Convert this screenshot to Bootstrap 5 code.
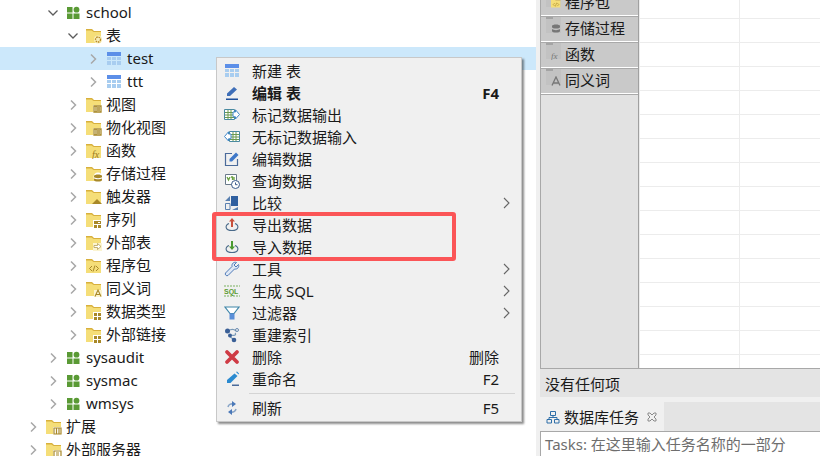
<!DOCTYPE html>
<html lang="zh-CN">
<head>
  <meta charset="UTF-8">
  <meta name="viewport" content="width=device-width, initial-scale=1.0">
  <link rel="stylesheet" href="https://cdn.jsdelivr.net/npm/bootstrap@5.3.6/dist/css/bootstrap.min.css">
  <script src="https://cdn.jsdelivr.net/npm/bootstrap@5.3.6/dist/js/bootstrap.bundle.min.js"></script>
  <style>
    html, body { height: 456px; overflow: hidden; }
    body { font: 15px/1.2 "Noto Sans", "Noto Sans CJK SC", sans-serif; color: #1a1a1a; background: #fff; }
    .app-wrap { width: 820px; height: 456px; }

    /* tree on the left */
    .tree-pane { width: 536px; padding-top: 1px; flex: none; }
    .tree-row { height: 23px; white-space: nowrap; }
    .tree-row.lv0 { padding-left: 27px; }
    .tree-row.lv1 { padding-left: 47px; }
    .tree-row.lv2 { padding-left: 67px; }
    .tree-row.lv3 { padding-left: 87px; }
    .tree-row.picked { background: #cce8fb; }
    .tw { width: 12px; height: 12px; margin-right: 7px; flex: none; }
    .ti { width: 16px; height: 16px; margin-right: 4px; flex: none; }
    .tl { font-size: 15px; margin-top: -2px; }
    .lv1 > .ti { margin-left: 1px; margin-right: 3px; }
    .lv3 > .tl { margin-left: 1px; }

    /* context menu */
    .ctx-menu.dropdown-menu { position: absolute; display: block; left: 216px; top: 57px; width: 306px; height: 365px; min-width: 0;
      padding: 2px 0 0; margin: 0; font-size: 15px; background: #f0f0f0; border: 1px solid #c8c8c8; border-radius: 0;
      box-shadow: 2px 2px 2px rgba(0,0,0,.45); }
    .ctx-menu .dropdown-item { height: 22px; padding: 0; color: #1a1a1a; }
    .mi { width: 16px; height: 16px; margin: 0 12px 0 7px; flex: none; }
    .ms { width: 60px; text-align: right; flex: none; }
    .ma { width: 22px; flex: none; padding-left: 3px; }
    .ma svg { width: 10px; height: 12px; display: block; }
    .ctx-menu .dropdown-divider { margin: 3px 6px 3px 32px; border-color: #d4d4d4; opacity: 1; }
    .red-mark { position: absolute; z-index: 1001; left: 212px; top: 212px; width: 244px; height: 49px; border: 4px solid #fb5557; border-radius: 3px; pointer-events: none; }

    /* right side */
    .side-pane { background: #f0f0f0; padding-left: 4px; }
    .design-area { border-left: 1px solid #a8a8a8; min-height: 0; }
    .palette { width: 98px; flex: none; background: #e2e2e2; border-right: 1px solid #a0a0a0; }
    .pal-item { height: 24px; background: #c9c9c9; margin-bottom: 2px; position: relative; box-shadow: 0 1px 0 #fff, 0 2px 0 #a9a9a9; }
    .pal-item:first-child { margin-top: -9px; }
    .pal-item::before { content: ""; position: absolute; left: 5px; top: 0; width: 15px; height: 16px; background: linear-gradient(#a4a4a4, #a4a4a4) no-repeat 0 0 / 7px 2px, #c2c2c2; }
    .pi { width: 10px; height: 10px; margin: 0 4px 0 10px; position: relative; flex: none; }
    .pal-item span { position: relative; margin-top: -2px; }
    .grid-area { background-color: #fff;
      background-image: linear-gradient(#ececec 1px, transparent 1px), linear-gradient(90deg, #ececec 1px, transparent 1px);
      background-size: 100% 24px, 100px 100%; background-position: 0 18px, 100px 0; }
    .note-bar { height: 29px; background: #e4e4e4; border-top: 1px solid #a8a8a8; padding: 2px 0 0 5px; flex: none; }
    .tab-strip { height: 34px; background: #e4e4e4; border-top: 5px solid #f0f0f0; flex: none; }
    .tab-on { width: 124px; background: #f0f0f0; padding-left: 6px; }
    .tab-on svg.db { width: 14px; height: 14px; margin-right: 4px; }
    .tab-on svg.cl { width: 10px; height: 10px; margin-left: 8px; }
    .task-box { height: 25px; background: #fff; border: 1px solid #a8a8a8; border-width: 1px 0 0 1px; color: #6e6e6e; padding-left: 4px; flex: none; white-space: nowrap; }
  </style>
</head>
<body>
  <svg width="0" height="0" class="position-absolute">
    <defs>
      <symbol id="c-r" viewBox="0 0 12 12"><path d="M4 1.500 8.500 6 4 10.500" fill="none" stroke="#a8a8a8" stroke-width="1.500"/></symbol>
      <symbol id="c-d" viewBox="0 0 12 12"><path d="M1.500 3.500 6 8 10.500 3.500" fill="none" stroke="#5c5c5c" stroke-width="1.300"/></symbol>
      <symbol id="m-r" viewBox="0 0 10 12"><path d="M2 1 7 6 2 11" fill="none" stroke="#666" stroke-width="1.100"/></symbol>
      <symbol id="schema" viewBox="0 0 16 16">
        <path fill="#5a9a35" d="M0 2h5.500v5.500H0zM0 8.500h5.500V14H0zM6.500 8.500h6V14h-6z"/><circle cx="9.500" cy="4.700" r="2.900" fill="#5a9a35"/>
      </symbol>
      <symbol id="table" viewBox="0 0 16 16">
        <path fill="#5c8fe8" d="M1 1h14v4H1z"/>
        <path fill="#a8cdf0" d="M1 6h4v3H1zM6 6h4v3H6zM11 6h4v3h-4zM1 10h4v4H1zM6 10h4v4H6zM11 10h4v4h-4z"/>
      </symbol>
      <symbol id="folder" viewBox="0 0 16 16">
        <path fill="#f5de78" d="M0 2h6l2 2h7v11H0z"/><path fill="#d8b03c" d="M0 1h6l2 2h7v1H7.500L5.500 2.500H0z"/>
      </symbol>
      <symbol id="f-tbl" viewBox="0 0 16 16">
        <use href="#folder"/><circle cx="12" cy="11.500" r="4" fill="#f8eeb8"/><circle cx="12" cy="11.500" r="2.500" fill="none" stroke="#b98a24" stroke-width="1.300" stroke-dasharray="1.600 .8"/>
      </symbol>
      <symbol id="f-view" viewBox="0 0 16 16">
        <use href="#folder"/><path fill="#fff" d="M7 8h9v8H7z"/><path fill="none" stroke="#a88828" stroke-width="1.300" d="M8 9h7v6H8zM10 9v6M11 11h3M11 13h3"/>
      </symbol>
      <symbol id="f-fx" viewBox="0 0 16 16">
        <use href="#folder"/><text x="6" y="15" font-family="Liberation Serif" font-style="italic" font-size="10" fill="#9a7a20">fx</text>
      </symbol>
      <symbol id="f-db" viewBox="0 0 16 16">
        <use href="#folder"/><ellipse cx="12" cy="11" rx="4.500" ry="4.500" fill="#fff"/><path fill="#a88828" d="M8 10c0-2 8-2 8 0v1c0 1.500-8 1.500-8 0zM8 12.500c2 1 6 1 8 0V14c0 2-8 2-8 0z"/>
      </symbol>
      <symbol id="f-trg" viewBox="0 0 16 16">
        <use href="#folder"/><path fill="#a88828" d="M6 15l5-5 5 5z"/>
      </symbol>
      <symbol id="f-seq" viewBox="0 0 16 16">
        <use href="#folder"/><path fill="#fff" d="M7 8h9v8H7z"/><path fill="#a88828" d="M8 9h7v3H8zM8 13h3v3H8zM12 13h3v3h-3z"/><path fill="#fff" d="M12 10h2v1h-2z"/>
      </symbol>
      <symbol id="f-ext" viewBox="0 0 16 16">
        <use href="#folder"/><path fill="#fbf4d0" d="M7 8h9v8H7z"/><path fill="#fff" stroke="#b8a050" stroke-width=".800" d="M8 10.500h3.500V8.500l3.500 3-3.500 3v-2H8z"/>
      </symbol>
      <symbol id="f-pkg" viewBox="0 0 16 16">
        <use href="#folder"/><path fill="none" stroke="#a88828" stroke-width="1" d="M6 8 3.500 10.500 6 13M10 8l2.500 2.500L10 13M9 7.500 7 13.500"/>
      </symbol>
      <symbol id="f-syn" viewBox="0 0 16 16">
        <use href="#folder"/><path fill="#fbf4d0" d="M8 9h8v7H8z"/><path fill="none" stroke="#a88828" stroke-width="1.100" d="M9 15.500 12 9l3 6.500M10 13.500h4"/>
      </symbol>
      <symbol id="f-type" viewBox="0 0 16 16">
        <use href="#folder"/><path fill="#fff" d="M7 8h9v8H7z"/><path fill="#a88828" d="M8 9h3v3H8zM12 9h3v3h-3zM8 13h3v3H8zM12 13h3v3h-3z"/>
      </symbol>
      <symbol id="f-ext2" viewBox="0 0 16 16">
        <use href="#folder"/><path fill="#fff" d="M7 8h9v8H7z"/><path fill="none" stroke="#a88828" stroke-width="1.200" d="M8 9h7v6H8zM10.500 9v6M13 9v6"/>
      </symbol>
      <symbol id="f-srv" viewBox="0 0 16 16">
        <use href="#folder"/><path fill="#fff" d="M7 8h9v8H7z"/><path fill="none" stroke="#a88828" stroke-width="1.200" d="M8 9h7v6H8zM10 11h3M10 13h3"/>
      </symbol>
      <symbol id="i-pen" viewBox="0 0 16 16">
        <path fill="#3f6fb8" d="M10 2l3 2.500L6 11H3v-2.500z"/><path fill="#1f4f9a" d="M2 13.500h12V15H2z"/>
      </symbol>
      <symbol id="i-out" viewBox="0 0 16 16">
        <path fill="#fff" stroke="#4a8aa0" d="M.5 2.500h10v10H.5z"/><path stroke="#6a9a50" d="M1 5.500h9M1 8h9M1 10.500h9M4 3v9M7 3v9" fill="none"/><path fill="#fff" stroke="#3f86c8" d="M9 5h2.500V2.800L15.500 7.500 11.500 12V9.800H9z"/>
      </symbol>
      <symbol id="i-in" viewBox="0 0 16 16">
        <path fill="#fff" stroke="#4a8aa0" d="M5.500 2.500h10v10h-10z"/><path stroke="#6a9a50" d="M6 5.500h9M6 8h9M6 10.500h9M9 3v9M12 3v9" fill="none"/><path fill="#fff" stroke="#3f86c8" d="M7 5H4.500V2.800L.5 7.500 4.500 12V9.800H7z"/>
      </symbol>
      <symbol id="i-edit" viewBox="0 0 16 16">
        <path fill="none" stroke="#4a6a9a" stroke-width="1.200" d="M8 2.500H1.500v12h12V8"/><path fill="#3f78c8" d="M12 1.500l2.500 2.500L8 10.500H5.500V8z"/>
      </symbol>
      <symbol id="i-query" viewBox="0 0 16 16">
        <path fill="#fff" stroke="#6a7a8a" d="M1.500 1.500h11v10h-11z"/><path fill="none" stroke="#6aa040" stroke-width="1.300" d="M3 4l1.500 3L6 4M7 4h1.500v3M10 4v3"/><circle cx="11.500" cy="11.500" r="4" fill="#fff" stroke="#3a5a8a"/><path fill="none" stroke="#3a5a8a" d="M11.500 9.500v2.200h2"/>
      </symbol>
      <symbol id="i-cmp" viewBox="0 0 16 16">
        <path fill="#2f5f9f" d="M7 1h7v10H7z"/><path fill="none" stroke="#5a80b0" d="M1.500 8.500H6v6H1.500z"/><path fill="#5a80b0" d="M1 6l5-5v5zM8 15l6-3v3z"/>
      </symbol>
      <symbol id="i-pow" viewBox="0 0 16 16">
        <path fill="none" stroke="#4a6a8a" stroke-width="1.100" d="M5 6.500C1 8 .5 13.500 8 13.500S15 8 11 6.500"/>
      </symbol>
      <symbol id="i-wrench" viewBox="0 0 16 16">
        <path fill="#dfe8f5" stroke="#4f7ab8" d="M14.500 3.500 12 6 10 4l2.500-2.500C10 .5 7.500 2.500 8 5.500L1.500 12c-1 1.500 1 3.500 2.500 2.500L10.500 8c3 .5 5-2 4-4.500z"/>
      </symbol>
      <symbol id="i-funnel" viewBox="0 0 16 16">
        <path fill="#fff" stroke="#3f86a8" stroke-width="1.200" d="M1 2h14l-5 6.500H6z"/><path fill="#5a8fd8" d="M5.500 8.500h5v6h-5z"/>
      </symbol>
      <symbol id="i-index" viewBox="0 0 16 16">
        <path fill="none" stroke="#7a9ab8" stroke-width="1.100" d="M4 4c3-2 6-2 8 0M11 6c2 2-1 3-5 2M5 9l4 3"/><circle cx="3.500" cy="4" r="2.500" fill="#3a5f96"/><circle cx="6" cy="8.500" r="2" fill="#3a5f96"/><circle cx="10" cy="13" r="2.300" fill="#3a5f96"/><circle cx="13" cy="3" r="1.500" fill="none" stroke="#6a8ab0"/>
      </symbol>
      <symbol id="i-del" viewBox="0 0 16 16">
        <path fill="none" stroke="#cf3b45" stroke-width="3.800" stroke-linecap="round" d="M3 3l10 10M13 3 3 13"/>
      </symbol>
      <symbol id="i-ren" viewBox="0 0 16 16">
        <path fill="#2a8ad0" d="M10.500 2.500l3 2.500-7 7H3V9z"/><path fill="#4a6a9a" d="M8 13.500h7V15H8z"/><path fill="#2a8ad0" d="M12 1l1-.5 2 2-.5 1z"/>
      </symbol>
      <symbol id="i-ref" viewBox="0 0 16 16">
        <path fill="none" stroke="#8aa6c8" stroke-width="1.600" d="M4 7c.5-2.500 3-3.500 5-3"/><path fill="#4a78b8" d="M8 1l4 3-4 3z"/>
        <path fill="none" stroke="#8aa6c8" stroke-width="1.600" d="M12 9c-.5 2.500-3 3.500-5 3"/><path fill="#4a78b8" d="M8 15l-4-3 4-3z"/>
      </symbol>
    </defs>
  </svg>

  <div class="app-wrap position-relative d-flex overflow-hidden">
    <div class="tree-pane overflow-hidden">
      <div class="tree-row lv1 d-flex align-items-center"><svg class="tw"><use href="#c-d"/></svg><svg class="ti"><use href="#schema"/></svg><span class="tl">school</span></div>
      <div class="tree-row lv2 d-flex align-items-center"><svg class="tw"><use href="#c-d"/></svg><svg class="ti"><use href="#f-tbl"/></svg><span class="tl">表</span></div>
      <div class="tree-row lv3 picked d-flex align-items-center"><svg class="tw"><use href="#c-r"/></svg><svg class="ti"><use href="#table"/></svg><span class="tl">test</span></div>
      <div class="tree-row lv3 d-flex align-items-center"><svg class="tw"><use href="#c-r"/></svg><svg class="ti"><use href="#table"/></svg><span class="tl">ttt</span></div>
      <div class="tree-row lv2 d-flex align-items-center"><svg class="tw"><use href="#c-r"/></svg><svg class="ti"><use href="#f-view"/></svg><span class="tl">视图</span></div>
      <div class="tree-row lv2 d-flex align-items-center"><svg class="tw"><use href="#c-r"/></svg><svg class="ti"><use href="#f-view"/></svg><span class="tl">物化视图</span></div>
      <div class="tree-row lv2 d-flex align-items-center"><svg class="tw"><use href="#c-r"/></svg><svg class="ti"><use href="#f-fx"/></svg><span class="tl">函数</span></div>
      <div class="tree-row lv2 d-flex align-items-center"><svg class="tw"><use href="#c-r"/></svg><svg class="ti"><use href="#f-db"/></svg><span class="tl">存储过程</span></div>
      <div class="tree-row lv2 d-flex align-items-center"><svg class="tw"><use href="#c-r"/></svg><svg class="ti"><use href="#f-trg"/></svg><span class="tl">触发器</span></div>
      <div class="tree-row lv2 d-flex align-items-center"><svg class="tw"><use href="#c-r"/></svg><svg class="ti"><use href="#f-seq"/></svg><span class="tl">序列</span></div>
      <div class="tree-row lv2 d-flex align-items-center"><svg class="tw"><use href="#c-r"/></svg><svg class="ti"><use href="#f-ext"/></svg><span class="tl">外部表</span></div>
      <div class="tree-row lv2 d-flex align-items-center"><svg class="tw"><use href="#c-r"/></svg><svg class="ti"><use href="#f-pkg"/></svg><span class="tl">程序包</span></div>
      <div class="tree-row lv2 d-flex align-items-center"><svg class="tw"><use href="#c-r"/></svg><svg class="ti"><use href="#f-syn"/></svg><span class="tl">同义词</span></div>
      <div class="tree-row lv2 d-flex align-items-center"><svg class="tw"><use href="#c-r"/></svg><svg class="ti"><use href="#f-type"/></svg><span class="tl">数据类型</span></div>
      <div class="tree-row lv2 d-flex align-items-center"><svg class="tw"><use href="#c-r"/></svg><svg class="ti"><use href="#f-type"/></svg><span class="tl">外部链接</span></div>
      <div class="tree-row lv1 d-flex align-items-center"><svg class="tw"><use href="#c-r"/></svg><svg class="ti"><use href="#schema"/></svg><span class="tl">sysaudit</span></div>
      <div class="tree-row lv1 d-flex align-items-center"><svg class="tw"><use href="#c-r"/></svg><svg class="ti"><use href="#schema"/></svg><span class="tl">sysmac</span></div>
      <div class="tree-row lv1 d-flex align-items-center"><svg class="tw"><use href="#c-r"/></svg><svg class="ti"><use href="#schema"/></svg><span class="tl">wmsys</span></div>
      <div class="tree-row lv0 d-flex align-items-center"><svg class="tw"><use href="#c-r"/></svg><svg class="ti"><use href="#f-ext2"/></svg><span class="tl">扩展</span></div>
      <div class="tree-row lv0 d-flex align-items-center"><svg class="tw"><use href="#c-r"/></svg><svg class="ti"><use href="#f-srv"/></svg><span class="tl">外部服务器</span></div>
    </div>

    <div class="side-pane flex-grow-1 d-flex flex-column overflow-hidden">
      <div class="design-area d-flex flex-grow-1 overflow-hidden">
        <div class="palette overflow-hidden">
          <div class="pal-item d-flex align-items-center"><svg class="pi"><use href="#f-pkg"/></svg><span>程序包</span></div>
          <div class="pal-item d-flex align-items-center"><svg class="pi" viewBox="0 0 10 10"><path fill="#777" d="M1 2c0-2 8-2 8 0v1c0 2-8 2-8 0zM1 5c2 1.500 6 1.500 8 0v2c0 2-8 2-8 0z"/></svg><span>存储过程</span></div>
          <div class="pal-item d-flex align-items-center"><svg class="pi" viewBox="0 0 10 10"><text x="0" y="9" font-family="Liberation Serif" font-style="italic" font-size="9" fill="#777">fx</text></svg><span>函数</span></div>
          <div class="pal-item d-flex align-items-center"><svg class="pi" viewBox="0 0 10 10"><path fill="none" stroke="#777" stroke-width="1.300" d="M1 9.500 5 1l4 8.500M2.500 7h5"/></svg><span>同义词</span></div>
        </div>
        <div class="grid-area flex-grow-1"></div>
      </div>
      <div class="note-bar d-flex align-items-center">没有任何项</div>
      <div class="tab-strip d-flex">
        <div class="tab-on d-flex align-items-center">
          <svg class="db" viewBox="0 0 14 14"><path fill="none" stroke="#2f6fa8" d="M4.500 1.500h5v4h-5zM1 9.500h4.500v3.500H1zM8.500 9.500H13v3.500H8.500zM7 5.500v2M3 9.500v-2h8v2"/></svg>
          <span>数据库任务</span>
          <svg class="cl" viewBox="0 0 10 10"><path fill="none" stroke="#8a8a8a" d="M1 1l2 0 2 2 2-2 2 0 0 2-2 2 2 2 0 2-2 0-2-2-2 2-2 0 0-2 2-2-2-2z"/></svg>
        </div>
      </div>
      <div class="task-box d-flex align-items-center">Tasks: 在这里输入任务名称的一部分</div>
    </div>

    <div class="ctx-menu dropdown-menu">
      <a class="dropdown-item d-flex align-items-center" href="#"><svg class="mi"><use href="#table"/></svg><span class="flex-grow-1">新建 表</span></a>
      <a class="dropdown-item d-flex align-items-center fw-bold" href="#"><svg class="mi"><use href="#i-pen"/></svg><span class="flex-grow-1">编辑 表</span><span class="ms">F4</span><span class="ma"></span></a>
      <a class="dropdown-item d-flex align-items-center" href="#"><svg class="mi"><use href="#i-out"/></svg><span class="flex-grow-1">标记数据输出</span></a>
      <a class="dropdown-item d-flex align-items-center" href="#"><svg class="mi"><use href="#i-in"/></svg><span class="flex-grow-1">无标记数据输入</span></a>
      <a class="dropdown-item d-flex align-items-center" href="#"><svg class="mi"><use href="#i-edit"/></svg><span class="flex-grow-1">编辑数据</span></a>
      <a class="dropdown-item d-flex align-items-center" href="#"><svg class="mi"><use href="#i-query"/></svg><span class="flex-grow-1">查询数据</span></a>
      <a class="dropdown-item d-flex align-items-center" href="#"><svg class="mi"><use href="#i-cmp"/></svg><span class="flex-grow-1">比较</span><span class="ma"><svg><use href="#m-r"/></svg></span></a>
      <a class="dropdown-item d-flex align-items-center" href="#"><svg class="mi" viewBox="0 0 16 16"><use href="#i-pow"/><path fill="#c8503c" d="M8 1l3 3.500H9V10H7V4.500H5z"/></svg><span class="flex-grow-1">导出数据</span></a>
      <a class="dropdown-item d-flex align-items-center" href="#"><svg class="mi" viewBox="0 0 16 16"><use href="#i-pow"/><path fill="#4a9a30" d="M8 11 5 7.500h2V2h2v5.500h2z"/></svg><span class="flex-grow-1">导入数据</span></a>
      <a class="dropdown-item d-flex align-items-center" href="#"><svg class="mi"><use href="#i-wrench"/></svg><span class="flex-grow-1">工具</span><span class="ma"><svg><use href="#m-r"/></svg></span></a>
      <a class="dropdown-item d-flex align-items-center" href="#"><svg class="mi" viewBox="0 0 16 16"><path fill="none" stroke="#7ab060" stroke-dasharray="2 1" d="M0 3h16M0 13h16"/><text x="0" y="10.500" font-family="Liberation Sans" font-size="7" font-weight="700" fill="#5a9a30">SQL</text></svg><span class="flex-grow-1">生成 SQL</span><span class="ma"><svg><use href="#m-r"/></svg></span></a>
      <a class="dropdown-item d-flex align-items-center" href="#"><svg class="mi"><use href="#i-funnel"/></svg><span class="flex-grow-1">过滤器</span><span class="ma"><svg><use href="#m-r"/></svg></span></a>
      <a class="dropdown-item d-flex align-items-center" href="#"><svg class="mi"><use href="#i-index"/></svg><span class="flex-grow-1">重建索引</span></a>
      <a class="dropdown-item d-flex align-items-center" href="#"><svg class="mi"><use href="#i-del"/></svg><span class="flex-grow-1">删除</span><span class="ms">删除</span><span class="ma"></span></a>
      <a class="dropdown-item d-flex align-items-center" href="#"><svg class="mi"><use href="#i-ren"/></svg><span class="flex-grow-1">重命名</span><span class="ms">F2</span><span class="ma"></span></a>
      <hr class="dropdown-divider">
      <a class="dropdown-item d-flex align-items-center" href="#"><svg class="mi"><use href="#i-ref"/></svg><span class="flex-grow-1">刷新</span><span class="ms">F5</span><span class="ma"></span></a>
    </div>

    <div class="red-mark"></div>
  </div>
</body>
</html>
